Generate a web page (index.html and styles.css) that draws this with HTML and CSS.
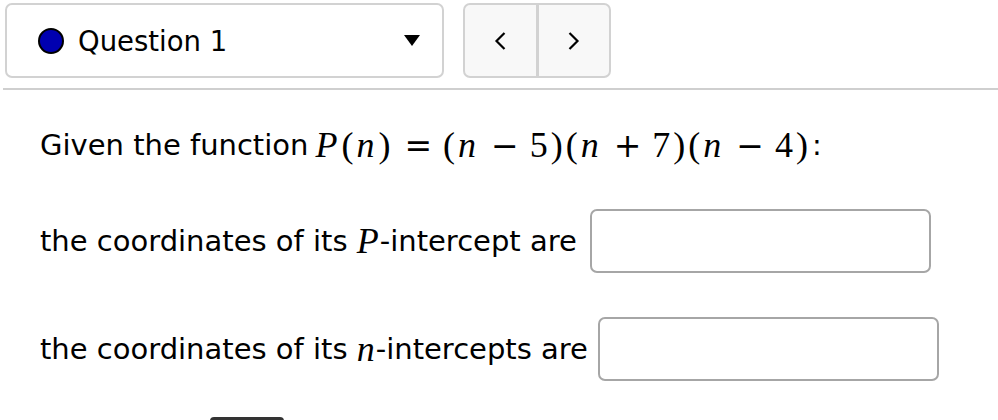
FILE: index.html
```html
<!DOCTYPE html>
<html>
<head>
<meta charset="utf-8">
<link rel="stylesheet" href="styles.css">
</head>
<body>
<div class="header">
  <div class="picker">
    <span class="dot"></span>
    <span class="qlabel">Question 1</span>
    <span class="caret"></span>
  </div>
  <div class="nav">
    <span class="navbtn">
      <svg width="14" height="20" viewBox="0 0 14 20"><path d="M11.5 2 L3.5 10 L11.5 18" fill="none" stroke="#000" stroke-width="2.2"/></svg>
    </span>
    <span class="navbtn">
      <svg width="14" height="20" viewBox="0 0 14 20"><path d="M2.5 2 L10.5 10 L2.5 18" fill="none" stroke="#000" stroke-width="2.2"/></svg>
    </span>
  </div>
</div>
<div class="rule"></div>
<div class="content">
  <p class="line first">Given the function<span class="math wide"><i>P</i>(<i>n</i>)<span class="op">=</span>(<i>n</i><span class="op">−</span>5)(<i>n</i><span class="op">+</span>7)(<i>n</i><span class="op">−</span>4)</span>:</p>
  <p class="line q">the coordinates of its <span class="math"><i>P</i></span>-intercept are<span class="answer"></span></p>
  <p class="line q">the coordinates of its <span class="math"><i>n</i></span>-intercepts are<span class="answer a2"></span></p>
  <div class="help">Question Help: <span class="vid">Video</span> <span class="link">Message</span></div>
</div>
</body>
</html>
```
FILE: styles.css
```css
html, body { margin: 0; padding: 0; background: #fff; }
body {
  font-family: "DejaVu Sans", sans-serif;
  color: #000;
  width: 998px;
  height: 420px;
  overflow: hidden;
}
.header {
  display: flex;
  align-items: flex-start;
  padding: 3px 0 0 5px;
  gap: 19px;
}
.picker {
  box-sizing: border-box;
  width: 439px;
  height: 75px;
  border: 2px solid #d2d2d2;
  border-radius: 7px;
  display: flex;
  align-items: center;
  padding-left: 31px;
}
.dot {
  box-sizing: border-box;
  width: 26px;
  height: 26px;
  border-radius: 50%;
  border: 2px solid #000;
  background: #0000b0;
  margin-right: 14px;
}
.qlabel {
  font-size: 27.5px;
  flex: 1;
}
.caret {
  width: 0; height: 0;
  border-left: 8px solid transparent;
  border-right: 8px solid transparent;
  border-top: 11px solid #000;
  margin-right: 22px;
}
.nav {
  box-sizing: border-box;
  width: 148px;
  height: 75px;
  border: 2px solid #d2d2d2;
  border-radius: 7px;
  background: #f8f8f8;
  display: flex;
}
.navbtn {
  flex: 1;
  display: flex;
  align-items: center;
  justify-content: center;
}
.navbtn + .navbtn { border-left: 3px solid #d2d2d2; }
.rule {
  height: 2px;
  background: #cfcfcf;
  margin: 10px 0 0 3px;
}
.content { padding-left: 40px; }
.line {
  margin: 0;
  font-size: 29px;
  display: flex;
  align-items: center;
  white-space: pre;
}
.first { margin-top: 37px; height: 36px; }
.math { font-family: "Liberation Serif", serif; font-size: 36px; }
.math i { font-style: italic; margin-right: 1px; }
.wide { letter-spacing: 3px; margin-left: 7px; margin-right: 1px; }
.op { font-family: "DejaVu Serif", serif; font-size: 33px; margin: 0 8px; }
.wide .op { margin: 0 11px; letter-spacing: 0; }
.answer {
  display: inline-block;
  box-sizing: border-box;
  width: 341px;
  height: 64px;
  border: 2px solid #a6a6a6;
  border-radius: 7px;
  margin-left: 13px;
}
.a2 { margin-left: 10px; }
.first + .q { margin-top: 46px; }
.q + .q { margin-top: 44px; }
.help { margin-top: 36px; font-size: 22px; color: #777; }
.vid { background: #333; color: #fff; border-radius: 4px; padding: 0 6px; }
.link { color: #5a4fc4; }
```
